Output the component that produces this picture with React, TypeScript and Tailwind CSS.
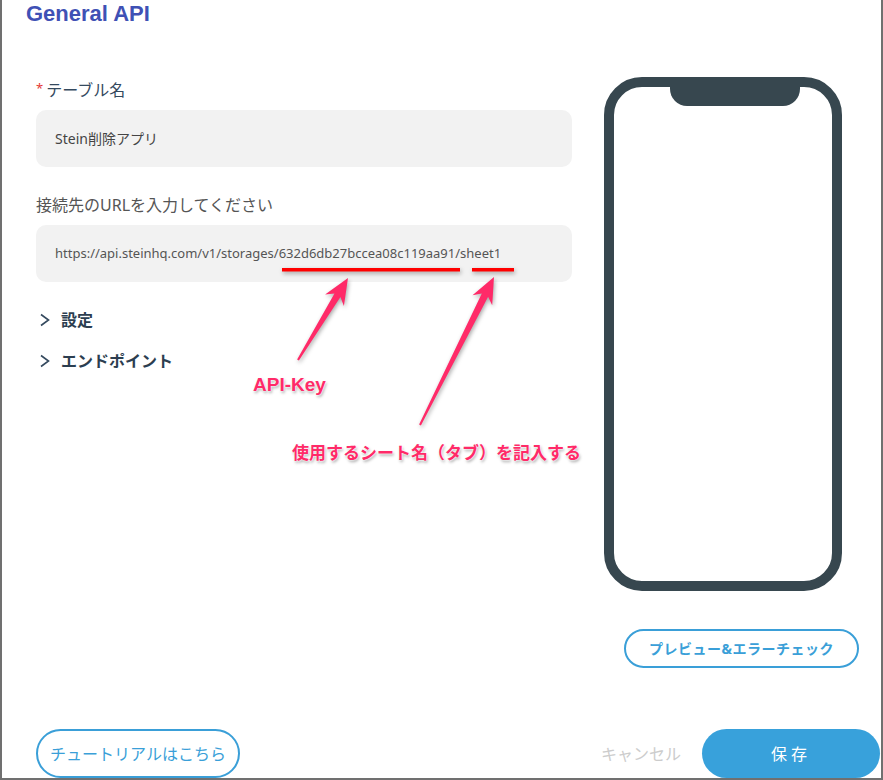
import React from 'react';

type Pt = [number, number];

// 注釈用の矢印（細い尾から太くなり、先端に矢尻）
const arrowPoints = (tail: Pt, tip: Pt, headLen = 26, headW = 11, shaftW = 3.5, tailW = 1) => {
  const dx = tip[0] - tail[0];
  const dy = tip[1] - tail[1];
  const len = Math.hypot(dx, dy);
  const d: Pt = [dx / len, dy / len];
  const n: Pt = [-d[1], d[0]];
  const at = (back: number, side: number): Pt => [
    tip[0] - d[0] * back + n[0] * side,
    tip[1] - d[1] * back + n[1] * side,
  ];
  const pts: Pt[] = [
    tip,
    at(headLen, headW),
    at(headLen * 0.78, shaftW),
    [tail[0] + n[0] * tailW, tail[1] + n[1] * tailW],
    [tail[0] - n[0] * tailW, tail[1] - n[1] * tailW],
    at(headLen * 0.78, -shaftW),
    at(headLen, -headW),
  ];
  return pts.map(p => `${p[0].toFixed(1)},${p[1].toFixed(1)}`).join(' ');
};

const Chevron = () => (
  <svg width="10" height="14" viewBox="0 0 10 14" className="ml-[4px] shrink-0">
    <polyline points="1,1.5 8.5,7 1,12.5" fill="none" stroke="#34495e" strokeWidth="1.6" />
  </svg>
);

const Phone = () => (
  <svg width="238" height="514" viewBox="0 0 238 514">
    <rect x="5" y="5" width="228" height="504" rx="33" fill="#fff" stroke="#37474f" strokeWidth="10" />
    <path d="M66 2 L196 2 L196 12 A17 17 0 0 1 179 29 L83 29 A17 17 0 0 1 66 12 Z" fill="#37474f" />
  </svg>
);

const Annotations = () => (
  <>
    <svg className="absolute inset-0 pointer-events-none" width="883" height="780">
      <g className="drop-shadow-[1px_2px_2px_rgba(0,0,0,0.35)]">
        <rect x="280" y="268" width="178" height="3.5" fill="#ff0000" />
        <rect x="470" y="268" width="42" height="3.5" fill="#ff0000" />
        <polygon points={arrowPoints([296, 360], [346, 278])} fill="#ff2a68" />
        <polygon points={arrowPoints([418, 425], [492, 277])} fill="#ff2a68" />
      </g>
    </svg>
    <div className="absolute left-[251px] top-[375px] text-[19px] leading-none font-bold text-[#ff2a68] font-['Liberation_Sans',sans-serif] [text-shadow:0_0_2px_#fff,0_0_2px_#fff,1px_2px_3px_rgba(0,0,0,0.35)]">
      API-Key
    </div>
    <div className="absolute left-[290px] top-[443px] text-[17px] leading-none font-bold text-[#ff2a68] font-['Noto_Sans_CJK_JP',sans-serif] [text-shadow:0_0_2px_#fff,0_0_2px_#fff,1px_2px_3px_rgba(0,0,0,0.35)]">
      使用するシート名（タブ）を記入する
    </div>
  </>
);

export default function App() {
  return (
    <div className="relative w-[883px] h-[780px] overflow-hidden bg-white border-l-2 border-r-2 border-b-2 border-[#707070] flex flex-col font-['Noto_Sans','Noto_Sans_CJK_JP',sans-serif]">
      <div className="h-[28px] pl-[24px] text-[22px] leading-[28px] font-bold text-[#3f51b5] font-['Liberation_Sans','Noto_Sans_CJK_JP',sans-serif]">
        General API
      </div>

      <div className="flex">
        {/* 入力フォーム */}
        <div className="w-[536px] ml-[34px] flex flex-col">
          <div className="mt-[50px] h-[24px] flex items-center text-[16px] text-[#34495e]">
            <span className="text-[#e53935] text-[13px] mr-[3px] -mt-[2px]">*</span>
            テーブル名
          </div>
          <div className="mt-[8px] h-[57px] rounded-[10px] bg-[#f2f2f2] flex items-center pl-[19px] text-[14px] text-[#444]">
            Stein削除アプリ
          </div>
          <div className="mt-[26px] h-[24px] flex items-center text-[16px] text-[#555]">
            接続先のURLを入力してください
          </div>
          <div className="mt-[8px] h-[57px] rounded-[10px] bg-[#f2f2f2] flex items-center pl-[19px] text-[13px] text-[#555]">
            https://api.steinhq.com/v1/storages/632d6db27bccea08c119aa91/sheet1
          </div>
          <div className="mt-[26px] h-[24px] flex items-center gap-[11px] text-[16px] font-bold text-[#2c3e50]">
            <Chevron />
            設定
          </div>
          <div className="mt-[17px] h-[24px] flex items-center gap-[11px] text-[16px] font-bold text-[#2c3e50]">
            <Chevron />
            エンドポイント
          </div>
        </div>

        {/* プレビュー */}
        <div className="ml-[32px] flex flex-col">
          <div className="mt-[49px]">
            <Phone />
          </div>
          <button className="mt-[38px] ml-[20px] w-[235px] h-[39px] rounded-full border-2 border-[#3a9fd8] text-[#3a9fd8] text-[14px] font-bold tracking-[0.5px] flex items-center justify-center">
            プレビュー&amp;エラーチェック
          </button>
        </div>
      </div>

      <div className="mt-auto h-[49px] flex items-center">
        <button className="ml-[34px] w-[204px] h-[49px] rounded-full border-2 border-[#3a9fd8] text-[#3a9fd8] text-[16px] flex items-center justify-center">
          チュートリアルはこちら
        </button>
        <span className="ml-auto text-[16px] text-[#cccccc]">キャンセル</span>
        <button className="ml-[21px] mr-[1px] w-[178px] h-[49px] rounded-full bg-[#38a1db] text-white text-[16px] tracking-[4px] flex items-center justify-center">
          保存
        </button>
      </div>

      <Annotations />
    </div>
  );
}
